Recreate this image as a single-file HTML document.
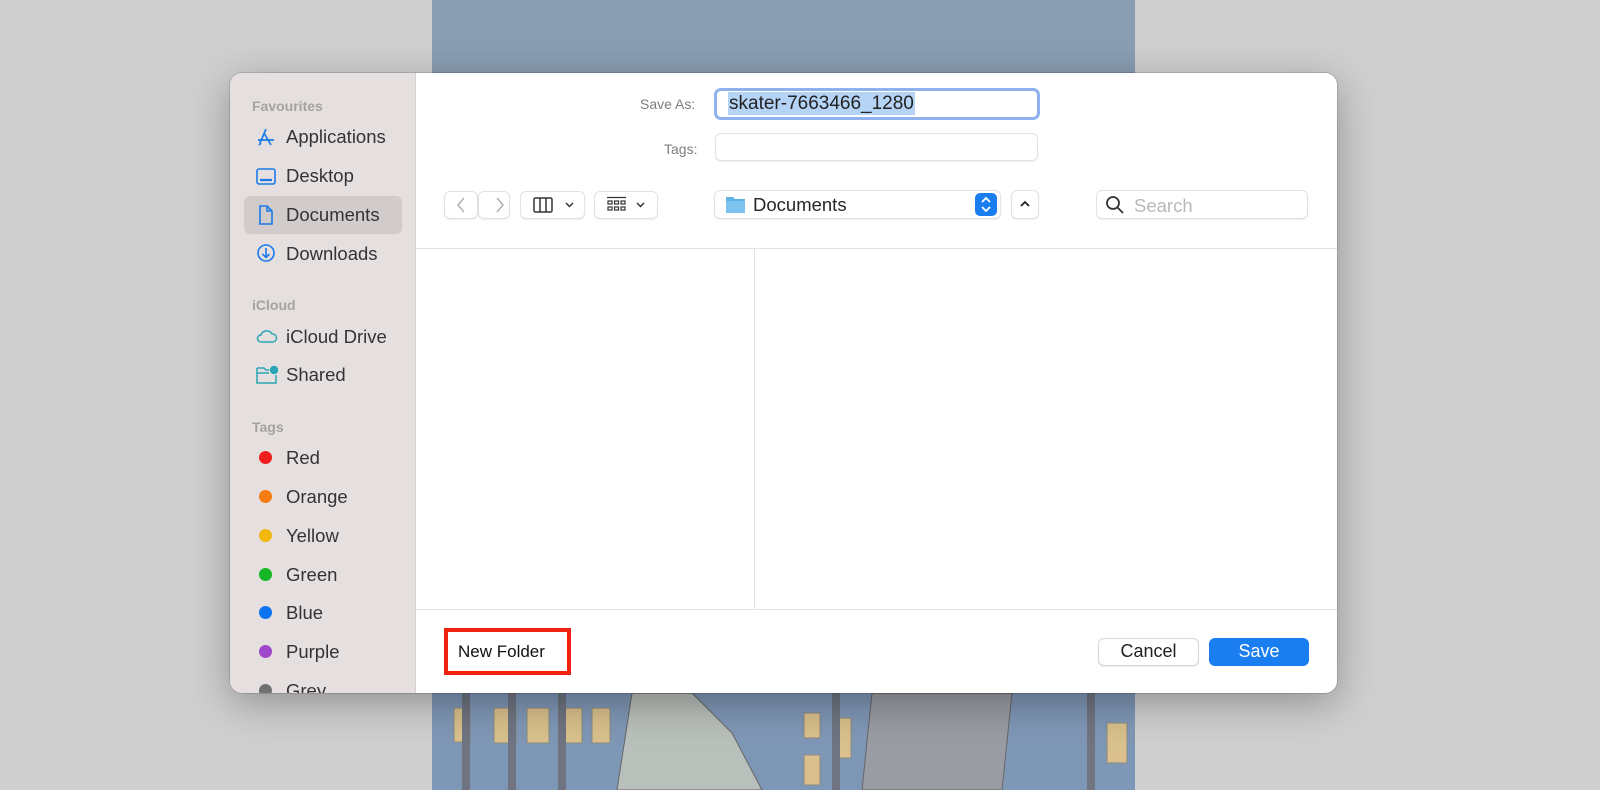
<!DOCTYPE html>
<html><head><meta charset="utf-8"><style>
*{margin:0;padding:0;box-sizing:border-box}
body{width:1600px;height:790px;background:#cfcfcf;position:relative;overflow:hidden;font-family:"Liberation Sans",sans-serif;color:#262626}
.a{position:absolute}
.bg{left:432px;top:0;width:703px;height:790px;background:#8a9db2}
.dlg{left:230px;top:73px;width:1107px;height:620px;border-radius:12px;background:#fff;overflow:hidden;box-shadow:0 10px 40px rgba(0,0,0,.3),0 0 0 1px rgba(0,0,0,.12)}
.side{left:0;top:0;width:186px;height:620px;background:#e6dfdf;border-right:1px solid #d4cfcf}
.hd{font-size:14px;font-weight:bold;color:#a7a2a2;left:22px}
.it{font-size:18.5px;left:56px;color:#333}
.ic{left:26px}
.dot{width:13px;height:13px;border-radius:50%;left:29px}
.lbl{font-size:14px;color:#7d7d7d}
.box{border:1px solid #e2e2e2;border-radius:6px;background:#fff;box-shadow:0 1px 1px rgba(0,0,0,.08)}
</style></head><body>
<div class="a bg"></div>
<svg class="a" style="left:432px;top:693px" width="703" height="97">
<rect width="703" height="97" fill="#7f97b6"/>
<g fill="#d9c08c" stroke="#8a8a80">
<rect x="22" y="15" width="16" height="34"/><rect x="62" y="15" width="22" height="35"/><rect x="95" y="15" width="22" height="35"/><rect x="128" y="15" width="22" height="35"/><rect x="160" y="15" width="18" height="35"/>
<rect x="372" y="20" width="16" height="25"/><rect x="372" y="62" width="16" height="30"/><rect x="405" y="25" width="14" height="40"/><rect x="675" y="30" width="20" height="40"/></g>
<g fill="#6f7480"><rect x="30" y="0" width="8" height="97"/><rect x="76" y="0" width="8" height="97"/><rect x="126" y="0" width="8" height="97"/><rect x="242" y="0" width="8" height="97"/><rect x="400" y="0" width="8" height="97"/><rect x="655" y="0" width="8" height="97"/></g>
<path d="M200 0 L260 0 L300 40 L330 97 L185 97 Z" fill="#b9bfba" stroke="#666"/>
<path d="M440 0 L580 0 L570 97 L430 97 Z" fill="#9a9ca3" stroke="#666"/>
</svg>
<div class="a dlg">
 <div class="a side">
  <div class="a hd" style="top:25px">Favourites</div>
  <svg class="a ic" style="top:54px" width="20" height="20" fill="none" stroke="#1a7ae8" stroke-width="1.7"><path d="M10 2 L4 16 M8 6 L15 18 M2 13 H18 M3 18 L5 16"/></svg>
  <div class="a it" style="top:53px">Applications</div>
  <svg class="a ic" style="top:94px" width="20" height="20" fill="none" stroke="#1a7ae8" stroke-width="1.6"><rect x="1" y="2" width="18" height="15" rx="2"/><path d="M4 13 H16" stroke-width="2.2"/></svg>
  <div class="a it" style="top:92px">Desktop</div>
  <div class="a" style="left:14px;top:123px;width:158px;height:38px;border-radius:6px;background:#d2cbcb"></div>
  <svg class="a ic" style="top:131px" width="20" height="22" fill="none" stroke="#1a7ae8" stroke-width="1.6"><path d="M4 2 H11 L16 7 V20 H4 Z M11 2 V7 H16"/></svg>
  <div class="a it" style="top:131px">Documents</div>
  <svg class="a ic" style="top:170px" width="20" height="20" fill="none" stroke="#1a7ae8" stroke-width="1.6"><circle cx="10" cy="10" r="8"/><path d="M10 5 V14 M6.5 11 L10 14.5 L13.5 11"/></svg>
  <div class="a it" style="top:170px">Downloads</div>
  <div class="a hd" style="top:224px">iCloud</div>
  <svg class="a ic" style="top:254px" width="22" height="18" fill="none" stroke="#2aa5b5" stroke-width="1.5"><path d="M5 15 H17 A4 4 0 0 0 16 7 A6 6 0 0 0 5 8 A3.5 3.5 0 0 0 5 15 Z"/></svg>
  <div class="a it" style="top:253px">iCloud Drive</div>
  <svg class="a ic" style="top:292px" width="22" height="20" fill="none" stroke="#2aa5b5" stroke-width="1.5"><path d="M1 3 H8 L10 5 H13 M1 3 V18 H20 V10 M1 8 H13"/><circle cx="18" cy="5" r="3.5" fill="#2aa5b5"/></svg>
  <div class="a it" style="top:291px">Shared</div>
  <div class="a hd" style="top:346px">Tags</div>
  <div class="a dot" style="top:378px;background:#f01d1d"></div><div class="a it" style="top:374px">Red</div>
  <div class="a dot" style="top:417px;background:#f57c10"></div><div class="a it" style="top:413px">Orange</div>
  <div class="a dot" style="top:456px;background:#f2b80c"></div><div class="a it" style="top:452px">Yellow</div>
  <div class="a dot" style="top:495px;background:#16b825"></div><div class="a it" style="top:491px">Green</div>
  <div class="a dot" style="top:533px;background:#0e73f0"></div><div class="a it" style="top:529px">Blue</div>
  <div class="a dot" style="top:572px;background:#a048cc"></div><div class="a it" style="top:568px">Purple</div>
  <div class="a dot" style="top:611px;background:#707070"></div><div class="a it" style="top:607px">Grey</div>
 </div>
 <div class="a lbl" style="left:410px;top:23px">Save As:</div>
 <div class="a" style="left:484px;top:15px;width:326px;height:32px;border:3px solid #8fb2ee;border-radius:7px;background:#fff"></div>
 <div class="a" style="left:498px;top:19px;height:23px;background:#b5d3f5;font-size:19px;color:#222;line-height:23px;padding:0 1px">skater-7663466_1280</div>
 <div class="a lbl" style="left:434px;top:68px">Tags:</div>
 <div class="a box" style="left:485px;top:60px;width:323px;height:28px"></div>
 <div class="a box" style="left:214px;top:118px;width:34px;height:28px"></div>
 <div class="a box" style="left:248px;top:118px;width:32px;height:28px"></div>
 <svg class="a" style="left:222px;top:122px" width="60" height="20" fill="none" stroke="#b0b0b0" stroke-width="1.5"><path d="M12 3 L6 10 L12 17 M45 3 L51 10 L45 17"/></svg>
 <div class="a box" style="left:290px;top:118px;width:65px;height:28px"></div>
 <svg class="a" style="left:303px;top:123px" width="45" height="18" fill="none" stroke="#333" stroke-width="1.5"><rect x="1" y="2" width="18" height="14" rx="1.5"/><path d="M7 2 V16 M13 2 V16 M33 7 L36.5 10.5 L40 7"/></svg>
 <div class="a box" style="left:364px;top:118px;width:64px;height:28px"></div>
 <svg class="a" style="left:376px;top:123px" width="45" height="18" fill="none" stroke="#333" stroke-width="1.2"><path d="M1 1.5 H20"/><rect x="2" y="5" width="4" height="3"/><rect x="8.5" y="5" width="4" height="3"/><rect x="15" y="5" width="4" height="3"/><rect x="2" y="11" width="4" height="3"/><rect x="8.5" y="11" width="4" height="3"/><rect x="15" y="11" width="4" height="3"/><path d="M31 7 L34.5 10.5 L38 7" stroke-width="1.5"/></svg>
 <div class="a box" style="left:484px;top:117px;width:287px;height:29px"></div>
 <svg class="a" style="left:495px;top:122px" width="22" height="19"><path d="M1 2 H8 L10 4 H20 V18 H1 Z" fill="#5fb2e8"/><path d="M1 6 H20 V18 H1 Z" fill="#7cc3f0"/></svg>
 <div class="a" style="left:523px;top:121px;font-size:18.5px">Documents</div>
 <div class="a" style="left:745px;top:120px;width:22px;height:23px;border-radius:5px;background:#1a7ef0"></div>
 <svg class="a" style="left:745px;top:120px" width="22" height="23" fill="none" stroke="#fff" stroke-width="1.8"><path d="M7 9 L11 5 L15 9 M7 14 L11 18 L15 14"/></svg>
 <div class="a box" style="left:781px;top:117px;width:28px;height:29px"></div>
 <svg class="a" style="left:781px;top:117px" width="28" height="29" fill="none" stroke="#222" stroke-width="1.8"><path d="M10 16 L14 12 L18 16"/></svg>
 <div class="a box" style="left:866px;top:117px;width:212px;height:29px"></div>
 <svg class="a" style="left:874px;top:121px" width="22" height="22" fill="none" stroke="#333" stroke-width="1.8"><circle cx="9" cy="9" r="6"/><path d="M13.5 13.5 L19 19"/></svg>
 <div class="a" style="left:904px;top:122px;font-size:18.5px;color:#b9b9b9">Search</div>
 <div class="a" style="left:186px;top:175px;width:921px;height:1px;background:#e3e3e3"></div>
 <div class="a" style="left:524px;top:176px;width:1px;height:360px;background:#e3e3e3"></div>
 <div class="a" style="left:186px;top:536px;width:921px;height:1px;background:#e3e3e3"></div>
 <div class="a" style="left:214px;top:555px;width:127px;height:47px;border:4px solid #f0220f"></div>
 <div class="a" style="left:228px;top:569px;font-size:17px;color:#111">New Folder</div>
 <div class="a box" style="left:868px;top:565px;width:101px;height:28px;border-color:#d6d6d6"></div>
 <div class="a" style="left:868px;top:568px;width:101px;text-align:center;font-size:18px;color:#222">Cancel</div>
 <div class="a" style="left:979px;top:565px;width:100px;height:28px;border-radius:6px;background:#1a7ef0"></div>
 <div class="a" style="left:979px;top:568px;width:100px;text-align:center;font-size:18px;color:#fff">Save</div>
</div>
</body></html>
